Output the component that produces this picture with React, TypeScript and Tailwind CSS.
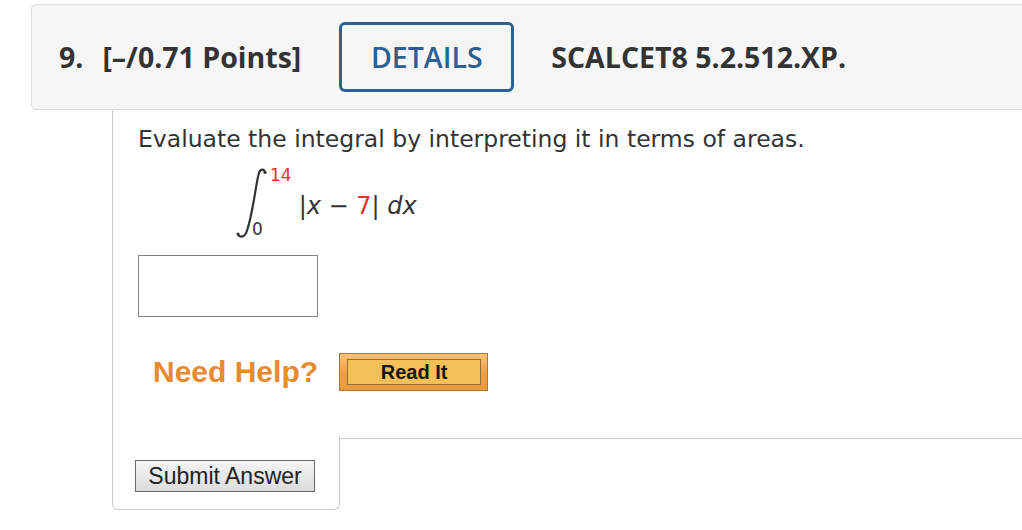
export default function App() {
  return (
    <div className="w-[1022px] h-[530px] overflow-hidden bg-white">
      <div className="pt-[4px] pl-[31px]">
        <div
          className="w-[1010px] h-[106px] flex items-center bg-[#f6f6f6] border border-[#dddddd] rounded-l-[5px] pl-[27px] text-[#333333] font-bold text-[28.5px]"
          style={{ fontFamily: '"Open Sans", sans-serif' }}
        >
          <span>9.</span>
          <span className="ml-[19px]">[–/0.71 Points]</span>
          <div className="ml-[38px] w-[175px] h-[70px] shrink-0 flex items-center justify-center border-[3px] border-[#2c5f93] rounded-[6px] text-[#2c5f93] font-semibold bg-[#f6f6f6]">
            DETAILS
          </div>
          <span className="ml-[37px]">SCALCET8 5.2.512.XP.</span>
        </div>

        <div className="ml-[81px]">
          <div
            className="h-[327px] border-l border-[#cccccc] pl-[25px] pt-[15px] text-[#333333]"
            style={{ fontFamily: '"DejaVu Sans", Verdana, sans-serif' }}
          >
            <div className="text-[23.5px] leading-[28px] whitespace-nowrap">
              Evaluate the integral by interpreting it in terms of areas.
            </div>

            <div className="mt-[14px] ml-[97px] flex h-[72px]">
              <svg width="32" height="72" viewBox="0 0 32 72" className="shrink-0">
                <path
                  d="M30 5 C29 2, 25.5 1.5, 24 6 C22 12, 20.5 25, 18 38 C15.5 51, 13.5 62, 10.5 67 C8.5 70.5, 4.5 70.5, 3 67.5"
                  stroke="#333333"
                  strokeWidth="2.2"
                  fill="none"
                  strokeLinecap="round"
                />
                <circle cx="30" cy="5.5" r="1.6" fill="#333333" />
                <circle cx="3" cy="67" r="1.6" fill="#333333" />
              </svg>
              <div className="ml-[3px] flex flex-col justify-between h-[72px] text-[17px] leading-[17px]">
                <span className="text-[#e5332a]">14</span>
                <span className="ml-[-18px] pb-[1px]">0</span>
              </div>
              <div className="ml-[7px] mt-[25px] text-[24px] leading-[28px] whitespace-pre">
                |<i>x</i> − <span className="text-[#e5332a]">7</span>| <i>dx</i>
              </div>
            </div>

            <div className="mt-[16px] w-[180px] h-[62px] border border-[#808080] bg-white" />

            <div className="mt-[36px] ml-[15px] flex items-center h-[38px]" style={{ fontFamily: '"Liberation Sans", Arial, sans-serif' }}>
              <span className="text-[30px] leading-[34px] font-bold text-[#e78a30]">Need Help?</span>
              <div className="ml-[21px] w-[149px] h-[38px] border border-[#a47640] bg-gradient-to-b from-[#f6c27a] via-[#eea043] to-[#e89a3d] pt-[5px] pb-[5px] pl-[7px] pr-[6px]">
                <div className="h-full border border-[#9b6e34] bg-[#f2bf58] flex items-center justify-center text-[20px] font-bold text-[#161616]">
                  Read It
                </div>
              </div>
            </div>
          </div>

          <div className="flex">
            <div className="w-[228px] h-[73px] border-l border-r border-b border-[#cccccc] rounded-b-[6px] pl-[22px] pt-[23px]">
              <div
                className="w-[180px] h-[32px] border border-[#6b6b6b] bg-gradient-to-b from-[#f4f4f4] to-[#dcdcdc] flex items-center justify-center text-[23px] text-[#222222]"
                style={{ fontFamily: '"Liberation Sans", Arial, sans-serif' }}
              >
                Submit Answer
              </div>
            </div>
            <div className="flex-1 mt-[1px] border-t border-[#cccccc]" />
          </div>
        </div>
      </div>
    </div>
  );
}
